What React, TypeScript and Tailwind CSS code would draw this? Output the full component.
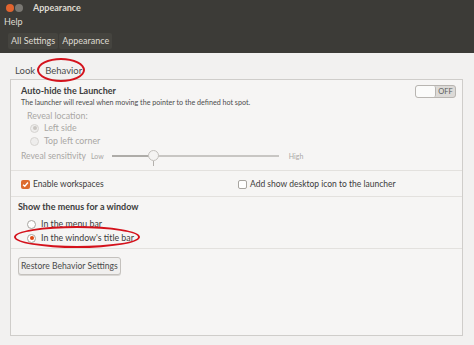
import React from "react";

const Radio = ({ checked = false, dim = false }: { checked?: boolean; dim?: boolean }) => (
  <span
    className={`flex h-[9px] w-[9px] items-center justify-center rounded-full border ${
      dim ? "border-[#d6d4d1] bg-[#eeedec]" : "border-[#a8a5a0] bg-white"
    }`}
  >
    {checked && (
      <span className={`h-[4px] w-[4px] rounded-full ${dim ? "bg-[#c9c6c2]" : "bg-[#dd4814]"}`} />
    )}
  </span>
);

const Check = ({ checked = false }: { checked?: boolean }) =>
  checked ? (
    <span className="flex h-[9px] w-[9px] items-center justify-center rounded-[2px] bg-[#dd6b2e]">
      <svg width="7" height="7" viewBox="0 0 8 8">
        <path d="M1.2 4.2 L3.2 6 L6.8 1.8" stroke="white" strokeWidth="1.6" fill="none" />
      </svg>
    </span>
  ) : (
    <span className="h-[9px] w-[9px] rounded-[2px] border border-[#a8a5a0] bg-white" />
  );

const App = () => {
  return (
    <div
      className="relative h-[345px] w-[474px] overflow-hidden bg-[#f2f1f0] leading-[12px] text-[#3c3c3c]"
      style={{ fontFamily: "Lato, 'Liberation Sans', sans-serif" }}
    >
      {/* title bar */}
      <div className="flex h-[15px] items-center bg-[#3c3b37] pl-[6px]">
        <span className="h-[8px] w-[8px] rounded-full bg-[#e1642f]" />
        <span className="ml-[1px] h-[8px] w-[8px] rounded-full bg-[#7a7873]" />
        <span className="ml-[10px] text-[9px] font-bold text-[#dfdbd2]">Appearance</span>
      </div>
      {/* menu bar */}
      <div className="flex h-[14px] items-center bg-[#3c3b37] pl-[4px] text-[9px] text-[#dfdbd2]">
        Help
      </div>
      {/* toolbar */}
      <div className="flex h-[24px] items-center gap-[1px] bg-[#3c3b37] pl-[8px] text-[9px] text-[#dfdbd2]">
        <span className="rounded-[2px] bg-[#45443f] px-[3px] py-[2px]">All Settings</span>
        <span className="rounded-[2px] bg-[#45443f] px-[3px] py-[2px]">Appearance</span>
      </div>

      {/* tabs */}
      <div className="mt-[12px] flex items-end gap-[8px] pl-[15px] text-[9.5px] text-[#4c4c4c]">
        <span>Look</span>
        <span className="px-[2px]">Behavior</span>
      </div>

      {/* panel */}
      <div className="mt-[2px] flex">
        <div className="ml-[10px] h-[257px] w-[453px] border border-[#cfcdca] bg-[#f6f5f4]">
          <div className="flex items-start justify-between pl-[10px] pr-[6px] pt-[5px]">
            <div>
              <div className="text-[9px] font-bold text-[#3c3c3c]">Auto-hide the Launcher</div>
              <div className="text-[7.15px] text-[#4c4c4c]">
                The launcher will reveal when moving the pointer to the defined hot spot.
              </div>
            </div>
            <div className="flex h-[13px] w-[41px] overflow-hidden rounded-[3px] border border-[#b8b5b1] bg-[#dcdad7]">
              <span className="w-[20px] rounded-[2px] border-r border-[#b8b5b1] bg-[#fbfbfa]" />
              <span className="flex flex-1 items-center justify-center text-[7.5px] text-[#5a5a5a]">
                OFF
              </span>
            </div>
          </div>

          <div className="mt-[1px] pl-[16px] text-[8.8px] text-[#a9a7a4]">
            <div>Reveal location:</div>
            <div className="flex items-center gap-[5px] pl-[3px]">
              <Radio checked dim />
              <span>Left side</span>
            </div>
            <div className="mt-[1px] flex items-center gap-[5px] pl-[3px]">
              <Radio dim />
              <span>Top left corner</span>
            </div>
          </div>
          <div className="mt-[3px] flex items-center pl-[10px] text-[#a9a7a4]">
            <span className="w-[70px] text-[8.6px]">Reveal sensitivity</span>
            <span className="text-[7px]">Low</span>
            <div className="relative ml-[8px] h-[2px] w-[167px] bg-[#c8c6c3]">
              <span className="absolute left-0 top-0 h-[2px] w-[41px] bg-[#aeaca8]" />
              <span className="absolute left-[36px] top-[-5px] h-[11px] w-[11px] rounded-full border border-[#c3c0bc] bg-[#f4f3f2]" />
              <span className="absolute left-[41px] top-[6px] h-[5px] w-[1px] bg-[#b3b0ac]" />
            </div>
            <span className="ml-[10px] text-[7px]">High</span>
          </div>

          <div className="mt-[8px] border-t border-[#e3e1de]" />
          <div className="flex items-center pb-[6px] pl-[10px] pt-[7px] text-[8.5px] text-[#3c3c3c]">
            <div className="flex w-[217px] items-center gap-[3px]">
              <Check checked />
              <span>Enable workspaces</span>
            </div>
            <div className="flex items-center gap-[3px]">
              <Check />
              <span>Add show desktop icon to the launcher</span>
            </div>
          </div>
          <div className="border-t border-[#e3e1de]" />

          <div className="pl-[7px] pt-[4px]">
            <div className="text-[9px] font-bold text-[#3c3c3c]">Show the menus for a window</div>
            <div className="mt-[5px] flex items-center gap-[5px] pl-[9px] text-[8.8px]">
              <Radio />
              <span>In the menu bar</span>
            </div>
            <div className="mt-[2px] flex items-center gap-[5px] pl-[9px] text-[8.8px]">
              <Radio checked />
              <span>In the window's title bar</span>
            </div>
          </div>
          <div className="mt-[4px] border-t border-[#e3e1de]" />

          <div className="pl-[7px] pt-[8px]">
            <button className="h-[18px] rounded-[3px] border border-[#c4c1bd] bg-[#f0efee] px-[2px] text-[8.6px] text-[#4a4a4a] shadow-[0_1px_0_#d8d6d3]">
              Restore Behavior Settings
            </button>
          </div>
        </div>
      </div>

      {/* annotation ellipses */}
      <div className="absolute left-[37px] top-[58px] h-[24px] w-[48px] rounded-[50%] border-[2px] border-[#d4121c]" />
      <div className="absolute left-[14px] top-[226px] h-[22px] w-[126px] rounded-[50%] border-[2px] border-[#d4121c]" />
    </div>
  );
};

export default App;
